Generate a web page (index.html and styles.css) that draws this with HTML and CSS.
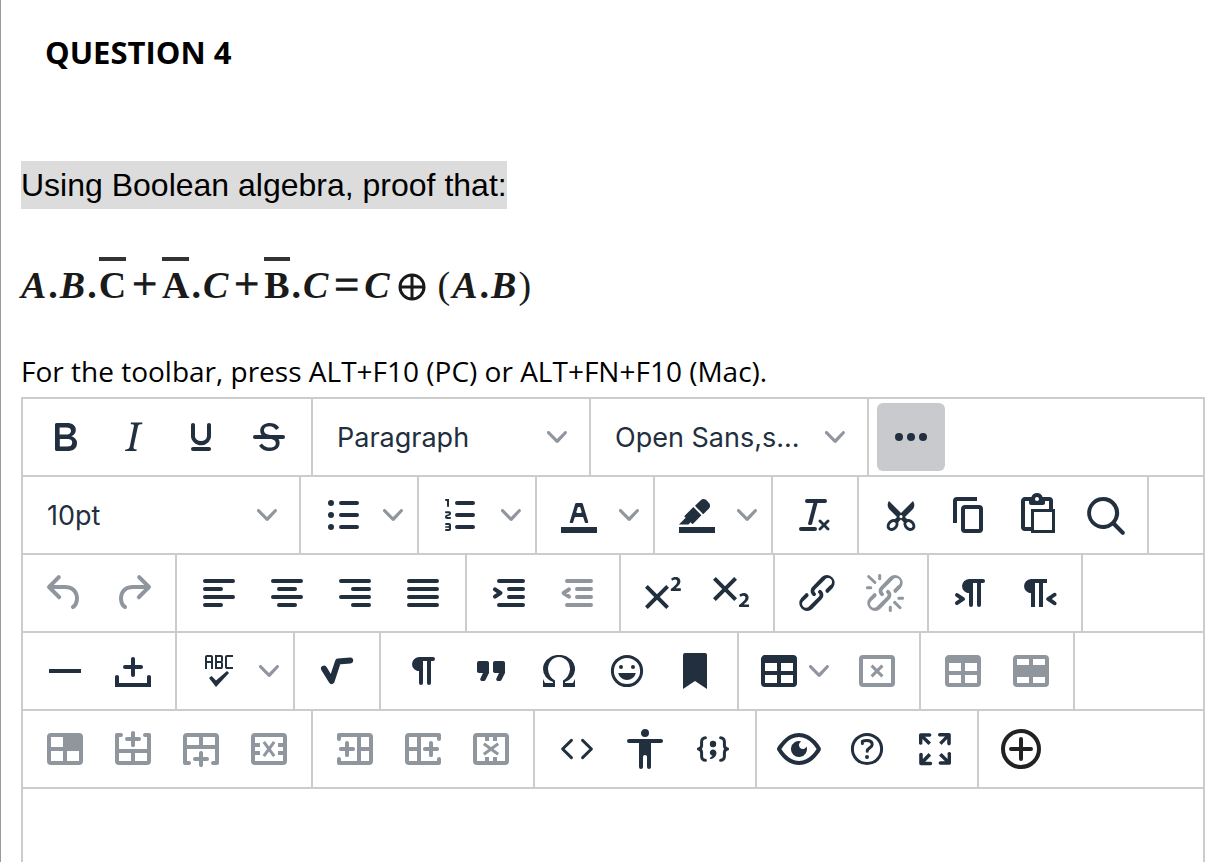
FILE: index.html
```
<!DOCTYPE html>
<html lang="en">
<head>
    <meta charset="UTF-8">
    <meta name="viewport" content="width=device-width, initial-scale=1.0">
    <title>Question 4</title>
    <link rel="stylesheet" href="styles.css">
</head>
<body>
    <!-- shapes used by more than one button -->
    <svg class="sprite" aria-hidden="true">
        <symbol id="chevron" viewBox="0 0 10 10"><path d="M8.7 2.2c.3-.3.8-.3 1 0 .4.4.4.9 0 1.2L5.7 7.8c-.3.3-.9.3-1.2 0L.2 3.4a.8.8 0 0 1 0-1.2c.3-.3.8-.3 1.1 0L5 6l3.7-3.8z"/></symbol>
        <symbol id="table" viewBox="0 0 24 24"><path fill-rule="evenodd" d="M19 4a2 2 0 0 1 2 2v12a2 2 0 0 1-2 2H5a2 2 0 0 1-2-2V6c0-1.1.9-2 2-2h14zM5 14v4h6v-4H5zm14 0h-6v4h6v-4zm0-6h-6v4h6V8zM5 12h6V8H5v4z"/></symbol>
        <symbol id="undo" viewBox="0 0 24 24"><path d="M6.4 8H12c3.7 0 6.2 2 6.8 5.1.6 2.7-.4 5.6-2.3 6.8a1 1 0 0 1-1-1.8c1.1-.6 1.8-2.7 1.4-4.6-.5-2.1-2.1-3.5-4.9-3.5H6.4l3.3 3.3a1 1 0 1 1-1.4 1.4l-5-5a1 1 0 0 1 0-1.4l5-5a1 1 0 0 1 1.4 1.4L6.4 8z"/></symbol>
        <symbol id="chain" viewBox="0 0 24 24"><path d="M6.2 12.3a1 1 0 0 1 1.4 1.4l-2.1 2a2 2 0 1 0 2.7 2.8l4.8-4.8a1 1 0 0 0 0-1.4 1 1 0 1 1 1.4-1.3 2.9 2.9 0 0 1 0 4L9.6 20a3.9 3.9 0 0 1-5.5-5.5l2-2zm11.6-.6a1 1 0 0 1-1.4-1.4l2-2a2 2 0 1 0-2.6-2.8L11 10.3a1 1 0 0 0 0 1.4A1 1 0 1 1 9.6 13a2.9 2.9 0 0 1 0-4L14.4 4a3.9 3.9 0 0 1 5.5 5.5l-2 2z"/></symbol>
        <symbol id="row-before" viewBox="0 0 24 24"><path fill-rule="evenodd" d="M6 4a1 1 0 1 1 0 2H5v6h14V6h-1a1 1 0 0 1 0-2h2c.6 0 1 .4 1 1v13a2 2 0 0 1-2 2H5a2 2 0 0 1-2-2V5c0-.6.4-1 1-1h2zm5 10H5v4h6v-4zm8 0h-6v4h6v-4zM12 3c.5 0 1 .4 1 .9V6h2a1 1 0 0 1 0 2h-2v2a1 1 0 0 1-2 .1V8H9a1 1 0 0 1 0-2h2V4c0-.6.4-1 1-1z"/></symbol>
        <symbol id="col-before" viewBox="0 0 24 24"><path fill-rule="evenodd" d="M19 4a2 2 0 0 1 2 2v12a2 2 0 0 1-2 2H4a1 1 0 0 1-1-1v-2a1 1 0 0 1 2 0v1h8V6H5v1a1 1 0 1 1-2 0V5c0-.6.4-1 1-1h15zm0 9h-4v5h4v-5zM8 8c.5 0 1 .4 1 .9V11h2a1 1 0 0 1 .1 2H9v2a1 1 0 0 1-2 .1V13H5a1 1 0 0 1-.1-2H7V9c0-.6.4-1 1-1zm11-2h-4v5h4V6z"/></symbol>
    </svg>

    <main class="page">
        <h2 class="question-title">QUESTION 4</h2>
        <p class="prompt"><span class="marked">Using Boolean algebra, proof that:</span></p>

        <div class="formula">
            <i>A</i><b>.</b><i>B</i><b>.</b><b class="not">C</b><span class="op">+</span><b class="not">A</b><b>.</b><i>C</i><span class="op">+</span><b class="not">B</b><b>.</b><i>C</i><span class="op">=</span><i>C</i>
            <svg class="xor" viewBox="0 0 28 28" role="img" aria-label="xor"><circle cx="14" cy="14" r="12"/><path d="M14 2v24M2 14h24"/></svg>
            <span>(</span><i>A</i><b>.</b><i>B</i><span>)</span>
        </div>

        <label class="hint" for="answer">For the toolbar, press ALT+F10 (PC) or ALT+FN+F10 (Mac).</label>

        <div class="editor">
            <div class="toolbar" role="toolbar">
                <div class="group">
                    <button class="tool" aria-label="Bold"><svg viewBox="0 0 24 24"><path fill-rule="evenodd" d="M7.8 19c-.3 0-.5 0-.6-.2l-.2-.5V5.7c0-.2 0-.4.2-.5l.6-.2h5c1.5 0 2.7.3 3.5 1 .7.6 1.1 1.4 1.1 2.5a3 3 0 0 1-.6 1.9c-.4.6-1 1-1.6 1.2.4.1.9.3 1.3.6s.8.7 1 1.2c.4.4.5 1 .5 1.6 0 1.3-.4 2.3-1.3 3-.8.7-2.1 1-3.8 1H7.8zm5-8.3c.6 0 1.2-.1 1.6-.5.4-.3.6-.7.6-1.3 0-1.1-.8-1.7-2.3-1.7H9.3v3.5h3.4zm.5 6c.7 0 1.3-.1 1.7-.4.4-.4.6-.9.6-1.5s-.2-1-.7-1.4c-.4-.3-1-.4-2-.4H9.4v3.8h4z"/></svg></button>
                    <button class="tool" aria-label="Italic"><svg viewBox="0 0 24 24"><path d="M16.7 4.7l-.1.9h-.3c-.6 0-1 0-1.4.3-.3.3-.4.6-.5 1.1l-2.1 9.8v.6c0 .5.4.8 1.4.8h.2l-.2.8H8l.2-.8h.2c1.1 0 1.8-.5 2-1.5l2-9.8.1-.5c0-.6-.4-.8-1.4-.8h-.3l.2-.9h5.8z"/></svg></button>
                    <button class="tool" aria-label="Underline"><svg viewBox="0 0 24 24"><path d="M16 5c.6 0 1 .4 1 1v5.5a4 4 0 0 1-.4 1.8l-1 1.4a5.3 5.3 0 0 1-5.5 1 5 5 0 0 1-1.6-1c-.5-.4-.8-.9-1.1-1.4a4 4 0 0 1-.4-1.8V6c0-.6.4-1 1-1s1 .4 1 1v5.5c0 .3 0 .6.2 1l.6.7a3.3 3.3 0 0 0 2.2.8 3.4 3.4 0 0 0 2.2-.8c.3-.2.4-.5.6-.8l.2-.9V6c0-.6.4-1 1-1zM8 17h8c.6 0 1 .4 1 1s-.4 1-1 1H8a1 1 0 0 1 0-2z"/></svg></button>
                    <button class="tool" aria-label="Strikethrough"><svg viewBox="0 0 24 24"><path d="M15.6 8.5c-.5-.7-1-1.1-1.3-1.3-.6-.4-1.3-.6-2-.6-2.7 0-2.8 1.7-2.8 2.1 0 1.6 1.8 2 3.2 2.3 4.4.9 4.6 2.8 4.6 3.9 0 1.4-.7 4.1-5 4.1A6.2 6.2 0 0 1 7 16.4l1.5-1.1c.4.6 1.6 2 3.7 2 1.6 0 2.5-.4 3-1.2.4-.8.3-2-.8-2.6-.7-.4-1.6-.7-2.9-1-1-.2-3.9-.8-3.9-3.6C7.6 6 10.3 5 12.4 5c2.9 0 4.2 1.6 4.7 2.4l-1.5 1.1z"/><path d="M5 11h14a1 1 0 0 1 0 2H5a1 1 0 0 1 0-2z"/></svg></button>
                </div>
                <div class="group">
                    <div class="picker">
                        <select aria-label="Block style"><option>Paragraph</option></select>
                        <svg class="chevron"><use href="#chevron"/></svg>
                    </div>
                </div>
                <div class="group">
                    <div class="picker">
                        <select aria-label="Font"><option>Open Sans,s...</option></select>
                        <svg class="chevron"><use href="#chevron"/></svg>
                    </div>
                </div>
                <div class="group last">
                    <button class="tool active" aria-label="More" aria-pressed="true"><svg viewBox="0 0 24 24"><circle cx="6" cy="12" r="2"/><circle cx="12" cy="12" r="2"/><circle cx="18" cy="12" r="2"/></svg></button>
                </div>
            </div>

            <div class="toolbar overflow" role="toolbar">
                <div class="group">
                    <div class="picker">
                        <select aria-label="Font size"><option>10pt</option></select>
                        <svg class="chevron"><use href="#chevron"/></svg>
                    </div>
                </div>
                <div class="group">
                    <button class="tool" aria-label="Bullet list"><svg viewBox="0 0 24 24"><circle cx="6" cy="6" r="1.5"/><circle cx="6" cy="12" r="1.5"/><circle cx="6" cy="18" r="1.5"/><path class="line" d="M11 6h8M11 12h8M11 18h8"/></svg></button>
                    <button class="arrow" aria-label="Bullet list options"><svg class="chevron"><use href="#chevron"/></svg></button>
                </div>
                <div class="group">
                    <button class="tool" aria-label="Numbered list"><svg viewBox="0 0 24 24"><path class="line" d="M10 6h8M10 12h8M10 18h8"/><path d="M6 4v3.5c0 .3-.2.5-.5.5a.5.5 0 0 1-.5-.5V5h-.5a.5.5 0 0 1 0-1H6zm-1 8.8l.2.2h1.3c.3 0 .5.2.5.5s-.2.5-.5.5H4.9a1 1 0 0 1-.9-1V13c0-.4.3-.8.6-1l1.2-.4.2-.3a.2.2 0 0 0-.2-.2H4.5a.5.5 0 0 1-.5-.5c0-.3.2-.5.5-.5h1.6c.5 0 .9.4.9 1v.1c0 .4-.3.8-.6 1l-1.2.4-.2.3zM7 17v2c0 .6-.4 1-1 1H4.5a.5.5 0 0 1 0-1h1.2c.2 0 .3-.1.3-.3 0-.2-.1-.3-.3-.3H4.4a.4.4 0 1 1 0-.8h1.3c.2 0 .3-.1.3-.3 0-.2-.1-.3-.3-.3H4.5a.5.5 0 1 1 0-1H6c.6 0 1 .4 1 1z"/></svg></button>
                    <button class="arrow" aria-label="Numbered list options"><svg class="chevron"><use href="#chevron"/></svg></button>
                </div>
                <div class="group">
                    <button class="tool" aria-label="Text color"><svg viewBox="0 0 24 24"><path d="M3 18h18v3H3z"/><path fill-rule="evenodd" d="M8.7 16h-.8a.5.5 0 0 1-.5-.6l2.7-9c.1-.3.3-.4.5-.4h2.8c.2 0 .4.1.5.4l2.7 9a.5.5 0 0 1-.5.6h-.8a.5.5 0 0 1-.4-.4l-.7-2.2c0-.3-.3-.4-.5-.4h-3.4c-.2 0-.4.1-.5.4l-.7 2.2c0 .3-.2.4-.4.4zm2.6-7.6l-.6 2a.5.5 0 0 0 .5.6h1.6a.5.5 0 0 0 .5-.6l-.6-2c0-.3-.3-.4-.5-.4h-.4c-.2 0-.4.1-.5.4z"/></svg></button>
                    <button class="arrow" aria-label="Text color options"><svg class="chevron"><use href="#chevron"/></svg></button>
                </div>
                <div class="group">
                    <button class="tool" aria-label="Highlight color"><svg viewBox="0 0 24 24"><path d="M3 18h18v3H3z"/><path d="M7.7 16.7H3l3.3-3.3-.7-.8L10.2 8l4 4.1-4 4.2c-.2.2-.6.2-.8 0l-.6-.7-1.1 1.1zm5-7.5L11 7.4l3-2.9a2 2 0 0 1 2.6 0L18 6c.7.7.7 2 0 2.7l-2.9 2.9-1.8-1.8-.5-.6"/></svg></button>
                    <button class="arrow" aria-label="Highlight color options"><svg class="chevron"><use href="#chevron"/></svg></button>
                </div>
                <div class="group">
                    <button class="tool" aria-label="Clear formatting"><svg viewBox="0 0 24 24"><path d="M13.2 6a1 1 0 0 1 0 .2l-2.6 10a1 1 0 0 1-1 .8h-.2a.8.8 0 0 1-.8-1l2.6-10H8a1 1 0 1 1 0-2h9a1 1 0 0 1 0 2h-3.8zM5 18h7a1 1 0 0 1 0 2H5a1 1 0 0 1 0-2zm13 1.5L16.5 18 15 19.5a.7.7 0 0 1-1-1l1.5-1.5-1.5-1.5a.7.7 0 0 1 1-1l1.5 1.5 1.5-1.5a.7.7 0 0 1 1 1L17.5 17l1.5 1.5a.7.7 0 0 1-1 1z"/></svg></button>
                </div>
                <div class="group">
                    <button class="tool" aria-label="Cut"><svg viewBox="0 0 24 24"><path fill-rule="evenodd" d="M6 5l6 6 6-6 .5 1a3.3 3.3 0 0 1 0 2c0 .4-.3.7-.5 1l-4 4 1.6 1.6-1.6 1.6-2-2-2 2-1.6-1.6L10 13 6 9l-.5-1a3.3 3.3 0 0 1 0-2c0-.4.3-.7.5-1zM12 12a.8.8 0 1 0 0 1.6.8.8 0 0 0 0-1.6z"/><ellipse class="loop" cx="7.8" cy="17" rx="2.5" ry="1.9" transform="rotate(-45 7.8 17)"/><ellipse class="loop" cx="16.2" cy="17" rx="2.5" ry="1.9" transform="rotate(45 16.2 17)"/></svg></button>
                    <button class="tool" aria-label="Copy"><svg viewBox="0 0 24 24"><path fill-rule="evenodd" d="M16 3H6a2 2 0 0 0-2 2v11h2V5h10V3zm1 4a2 2 0 0 1 2 2v10a2 2 0 0 1-2 2h-7a2 2 0 0 1-2-2V9c0-1.2.9-2 2-2h7zm0 12V9h-7v10h7z"/></svg></button>
                    <button class="tool" aria-label="Paste"><svg viewBox="0 0 24 24"><path fill-rule="evenodd" d="M18 9V5h-2v1c0 .6-.4 1-1 1H9a1 1 0 0 1-1-1V5H6v13h3V9h9zM9 20H6a2 2 0 0 1-2-2V5c0-1.1.9-2 2-2h3.2A3 3 0 0 1 12 1a3 3 0 0 1 2.8 2H18a2 2 0 0 1 2 2v4h1v12H9v-1zm1.5-9.5v9h9v-9h-9zM12 3a1 1 0 0 0-1 1c0 .5.4 1 1 1s1-.5 1-1-.4-1-1-1z"/></svg></button>
                    <button class="tool" aria-label="Find"><svg viewBox="0 0 24 24"><path fill-rule="evenodd" d="M16 17.3a8 8 0 1 1 1.4-1.4l4.3 4.4a1 1 0 0 1-1.4 1.4l-4.4-4.3zm-5-.3a6 6 0 1 0 0-12 6 6 0 0 0 0 12z"/></svg></button>
                </div>

                <div class="group">
                    <button class="tool" aria-label="Undo" disabled><svg><use href="#undo"/></svg></button>
                    <button class="tool" aria-label="Redo" disabled><svg class="flip-x"><use href="#undo"/></svg></button>
                </div>
                <div class="group">
                    <button class="tool" aria-label="Align left"><svg viewBox="0 0 24 24"><path class="line" d="M5 6h14M5 10h8M5 14h14M5 18h8"/></svg></button>
                    <button class="tool" aria-label="Align center"><svg viewBox="0 0 24 24"><path class="line" d="M5 6h14M8 10h8M5 14h14M8 18h8"/></svg></button>
                    <button class="tool" aria-label="Align right"><svg viewBox="0 0 24 24"><path class="line" d="M5 6h14M11 10h8M5 14h14M11 18h8"/></svg></button>
                    <button class="tool" aria-label="Justify"><svg viewBox="0 0 24 24"><path class="line" d="M5 6h14M5 10h14M5 14h14M5 18h14"/></svg></button>
                </div>
                <div class="group">
                    <button class="tool" aria-label="Increase indent"><svg viewBox="0 0 24 24"><path class="line" d="M7 6h12M12 10h7M12 14h7M7 18h12M5 10.200l2.700 1.800L5 13.800"/></svg></button>
                    <button class="tool" aria-label="Decrease indent" disabled><svg viewBox="0 0 24 24"><path class="line" d="M7 6h12M12 10h7M12 14h7M7 18h12M8 10.200L5.300 12 8 13.800"/></svg></button>
                </div>
                <div class="group">
                    <button class="tool" aria-label="Superscript"><svg viewBox="0 0 24 24"><path d="M15 9.4L10.4 14l4.6 4.6-1.4 1.4L9 15.4 4.4 20 3 18.6 7.6 14 3 9.4 4.4 8 9 12.6 13.6 8 15 9.4zm5.9 1.6h-5v-1l1-.8 1.7-1.6c.3-.5.5-.9.5-1.3 0-.3 0-.5-.2-.7-.2-.2-.5-.3-.9-.3l-.8.2-.7.4-.4-1.2c.2-.2.5-.4 1-.5.3-.2.8-.2 1.2-.2.8 0 1.4.2 1.8.6.4.4.6 1 .6 1.6 0 .5-.2 1-.5 1.5l-1.3 1.4-.6.5h2.6V11z"/></svg></button>
                    <button class="tool" aria-label="Subscript"><svg viewBox="0 0 24 24"><path d="M10.4 10l4.6 4.6-1.4 1.4L9 11.4 4.4 16 3 14.6 7.6 10 3 5.4 4.4 4 9 8.6 13.6 4 15 5.4 10.4 10zM21 19h-5v-1l1-.8 1.7-1.6c.3-.4.5-.8.5-1.2 0-.3 0-.6-.2-.7-.2-.2-.5-.3-.9-.3a2 2 0 0 0-.8.2l-.7.3-.4-1.1 1-.6 1.2-.2c.8 0 1.4.3 1.8.7.4.4.6.9.6 1.5s-.2 1.1-.5 1.6a8 8 0 0 1-1.3 1.3l-.6.6h2.6V19z"/></svg></button>
                </div>
                <div class="group">
                    <button class="tool" aria-label="Insert link"><svg><use href="#chain"/></svg></button>
                    <button class="tool" aria-label="Remove link" disabled><svg viewBox="0 0 24 24"><use href="#chain"/><path d="M7.6 6.3a.8.8 0 0 1-1 1.1L3.3 4.2a.7.7 0 1 1 1-1l3.2 3.1zM5.1 8.6a.8.8 0 0 1 0 1.5H3a.8.8 0 0 1 0-1.5H5zm5-3.5a.8.8 0 0 1-1.5 0V3a.8.8 0 0 1 1.5 0V5zm6 11.8a.8.8 0 0 1 1-1l3.2 3.2a.8.8 0 0 1-1 1L16 17zm-2.2 2a.8.8 0 0 1 1.5 0V21a.8.8 0 0 1-1.5 0V19zm5-3.5a.7.7 0 1 1 0-1.5H21a.8.8 0 0 1 0 1.5H19z"/></svg></button>
                </div>
                <div class="group">
                    <button class="tool" aria-label="Left to right"><svg viewBox="0 0 24 24"><path d="M11 5h7a1 1 0 0 1 0 2h-1v11a1 1 0 0 1-2 0V7h-2v11a1 1 0 0 1-2 0v-6c-.5 0-1 0-1.4-.3A3.4 3.4 0 0 1 7.800 10a3.3 3.3 0 0 1 0-2.800 3.4 3.4 0 0 1 1.800-1.800L11 5zM4.400 16.200L6.200 15l-1.800-1.200a1 1 0 0 1 1.200-1.600l3 2a1 1 0 0 1 0 1.600l-3 2a1 1 0 1 1-1.200-1.600z"/></svg></button>
                    <button class="tool" aria-label="Right to left"><svg viewBox="0 0 24 24"><path d="M8 5h8v2h-2v12h-2V7h-2v12H8v-7c-.5 0-1 0-1.400-.3A3.4 3.4 0 0 1 4.800 10a3.3 3.3 0 0 1 0-2.800 3.4 3.4 0 0 1 1.800-1.800L8 5zm12 11.200a1 1 0 1 1-1 1.600l-3-2a1 1 0 0 1 0-1.600l3-2a1 1 0 1 1 1 1.600L18.400 15l1.800 1.200z"/></svg></button>
                </div>

                <div class="group">
                    <button class="tool" aria-label="Horizontal line"><svg viewBox="0 0 24 24"><path d="M4 11h16v2H4z"/></svg></button>
                    <button class="tool" aria-label="Nonbreaking space"><svg viewBox="0 0 24 24"><path d="M11 11H8a1 1 0 1 1 0-2h3V6c0-.6.4-1 1-1s1 .4 1 1v3h3c.6 0 1 .4 1 1s-.4 1-1 1h-3v3c0 .6-.4 1-1 1a1 1 0 0 1-1-1v-3zm10 4v5H3v-5c0-.6.4-1 1-1s1 .4 1 1v3h14v-3c0-.6.4-1 1-1s1 .4 1 1z"/></svg></button>
                </div>
                <div class="group">
                    <button class="tool" aria-label="Spellcheck"><svg viewBox="0 0 24 24"><path fill-rule="evenodd" d="M6 8v3H5V5c0-.3.1-.5.3-.7.2-.2.4-.3.7-.3h2c.3 0 .5.1.7.3.2.2.3.4.3.7v6H8V8H6zm0-3v2h2V5H6zm13 0h-3v5h3v1h-3a1 1 0 0 1-.7-.3 1 1 0 0 1-.3-.7V5c0-.3.1-.5.3-.7.2-.2.4-.3.7-.3h3v1zm-5 1.5l-.1.7c-.1.2-.3.3-.6.3.3 0 .5.1.6.3l.1.7V10c0 .3-.1.5-.3.7a1 1 0 0 1-.7.3h-3V4h3c.3 0 .5.1.7.3.2.2.3.4.3.7v1.5zM13 10V8h-2v2h2zm0-3V5h-2v2h2zm3 5l1 1-6.5 7L7 15.5l1.3-1 2.2 2.2L16 12z"/></svg></button>
                    <button class="arrow" aria-label="Spellcheck options"><svg class="chevron"><use href="#chevron"/></svg></button>
                </div>
                <div class="group">
                    <button class="tool" aria-label="Math editor"><svg viewBox="0 0 24 24"><path class="line thick" d="M5.5 10.8L9.300 17l3.200-9.700 6.100-.6"/></svg></button>
                </div>
                <div class="group">
                    <button class="tool" aria-label="Show invisible characters"><svg viewBox="0 0 24 24"><path d="M10 5h7a1 1 0 0 1 0 2h-1v11a1 1 0 0 1-2 0V7h-2v11a1 1 0 0 1-2 0v-6c-.5 0-1 0-1.4-.3A3.4 3.4 0 0 1 6.8 10a3.3 3.3 0 0 1 0-2.8 3.4 3.4 0 0 1 1.8-1.8L10 5z"/></svg></button>
                    <button class="tool" aria-label="Blockquote"><svg viewBox="0 0 24 24"><path d="M7.5 17h.9c.4 0 .7-.2.9-.6L11 13V8c0-.6-.4-1-1-1H6a1 1 0 0 0-1 1v4c0 .6.4 1 1 1h2l-1.3 2.7a1 1 0 0 0 .8 1.3zm8 0h.9c.4 0 .7-.2.9-.6L19 13V8c0-.6-.4-1-1-1h-4a1 1 0 0 0-1 1v4c0 .6.4 1 1 1h2l-1.3 2.7a1 1 0 0 0 .8 1.3z"/></svg></button>
                    <button class="tool" aria-label="Special character"><svg viewBox="0 0 24 24"><path d="M15 18h4l1-2v4h-6v-3.3l1.4-1a6 6 0 0 0 1.8-2.9 6.3 6.3 0 0 0-.1-4.1 5.8 5.8 0 0 0-3-3.2c-.6-.3-1.3-.5-2.1-.5a5.1 5.1 0 0 0-3.9 1.8 6.3 6.3 0 0 0-1.3 6 6.2 6.2 0 0 0 1.8 3l1.4.9V20H4v-4l1 2h4v-.5l-2-1L5.400 15A6.5 6.5 0 0 1 4 11c0-1 .2-1.9.6-2.7A7 7 0 0 1 7.8 5C8.900 4.300 10.400 4 12 4c1.600 0 3 .3 4.200 1a7 7 0 0 1 3.200 3.300A6.5 6.5 0 0 1 18.600 15L17 16.500l-2 1v.5z"/></svg></button>
                    <button class="tool" aria-label="Emoticons"><svg viewBox="0 0 24 24"><circle class="ring" cx="12" cy="12" r="7.3"/><circle cx="9" cy="10" r="1"/><circle cx="15" cy="10" r="1"/><path d="M7.6 13h8.8a4.500 4.500 0 0 1-8.800 0z"/></svg></button>
                    <button class="tool" aria-label="Anchor"><svg viewBox="0 0 24 24"><path d="M6 4v17l6-4 6 4V4c0-.6-.4-1-1-1H7a1 1 0 0 0-1 1z"/></svg></button>
                </div>
                <div class="group">
                    <button class="tool menu" aria-label="Table"><svg><use href="#table"/></svg><span class="menu-arrow"><svg class="chevron"><use href="#chevron"/></svg></span></button>
                    <button class="tool" aria-label="Delete table" disabled><svg viewBox="0 0 24 24"><rect class="frame" x="4" y="5" width="16" height="14" rx="1"/><path class="cross" d="M9.300 9.300l5.400 5.400M14.700 9.300l-5.400 5.400"/></svg></button>
                </div>
                <div class="group">
                    <button class="tool" aria-label="Table properties" disabled><svg><use href="#table"/></svg></button>
                    <button class="tool" aria-label="Row properties" disabled><svg viewBox="0 0 24 24"><rect class="frame" x="4" y="5" width="16" height="14" rx="1"/><path d="M4 9h16v6H4zM11 5h2v14h-2z"/></svg></button>
                </div>

                <div class="group">
                    <button class="tool" aria-label="Cell properties" disabled><svg viewBox="0 0 24 24"><rect class="frame" x="4" y="5" width="16" height="14" rx="1"/><path d="M11 5h9v8h-9zM4 11h8v2H4zM11 12h2v7h-2z"/></svg></button>
                    <button class="tool" aria-label="Insert row before" disabled><svg><use href="#row-before"/></svg></button>
                    <button class="tool" aria-label="Insert row after" disabled><svg class="flip-y"><use href="#row-before"/></svg></button>
                    <button class="tool" aria-label="Delete row" disabled><svg viewBox="0 0 24 24"><rect class="frame" x="4" y="5" width="16" height="14" rx="1"/><path class="tick" d="M5 10h2.500M5 14h2.500M16.500 10H19M16.500 14H19"/><path class="cross" d="M9.400 8.400l5.200 7.200M14.600 8.400l-5.200 7.200"/></svg></button>
                </div>
                <div class="group">
                    <button class="tool" aria-label="Insert column before" disabled><svg><use href="#col-before"/></svg></button>
                    <button class="tool" aria-label="Insert column after" disabled><svg class="flip-x"><use href="#col-before"/></svg></button>
                    <button class="tool" aria-label="Delete column" disabled><svg viewBox="0 0 24 24"><rect class="frame" x="4" y="5" width="16" height="14" rx="1"/><path class="tick" d="M10 6v2M14 6v2M10 16v2M14 16v2"/><path class="cross" d="M8.400 9.400l7.200 5.200M15.600 9.400l-7.200 5.200"/></svg></button>
                </div>
                <div class="group">
                    <button class="tool" aria-label="Source code"><svg viewBox="0 0 24 24"><path class="line thin" d="M9.200 7.700L4.800 12l4.400 4.300M14.800 7.700l4.400 4.300-4.400 4.300"/></svg></button>
                    <button class="tool" aria-label="Accessibility checker"><svg viewBox="0 0 24 24"><path d="M12 2a2 2 0 0 1 2 2 2 2 0 0 1-2 2 2 2 0 0 1-2-2c0-1.100.9-2 2-2zm8 7h-5v12c0 .6-.4 1-1 1a1 1 0 0 1-1-1v-5c0-.6-.4-1-1-1a1 1 0 0 0-1 1v5c0 .6-.4 1-1 1a1 1 0 0 1-1-1V9H4a1 1 0 1 1 0-2h16c.6 0 1 .4 1 1s-.4 1-1 1z"/></svg></button>
                    <button class="tool" aria-label="Code sample"><svg viewBox="0 0 24 24"><path class="line thin" d="M8.200 6.400a1.900 1.900 0 0 0-1.900 1.900v1.900A1.900 1.900 0 0 1 4.700 12a1.900 1.900 0 0 1 1.600 1.800v1.900a1.900 1.900 0 0 0 1.900 1.900M15.800 6.400a1.900 1.900 0 0 1 1.900 1.900v1.900a1.900 1.900 0 0 0 1.600 1.800 1.900 1.900 0 0 0-1.600 1.800v1.900a1.900 1.900 0 0 1-1.900 1.900"/><circle cx="12" cy="9.500" r="1.600"/><path d="M12 12.200c1 0 1.700.7 1.700 1.700 0 1.600-1 2.800-2.800 3.100-.5 0-.6-.6-.2-.8.6-.3.9-.6 1-.9-.8-.1-1.300-.7-1.300-1.500 0-.9.7-1.600 1.600-1.600z"/></svg></button>
                </div>
                <div class="group">
                    <button class="tool" aria-label="Preview"><svg viewBox="0 0 24 24"><path fill-rule="evenodd" d="M3.5 12.5c.5.8 1.1 1.6 1.8 2.3 2 2 4.2 3.2 6.7 3.2s4.700-1.200 6.700-3.200a16.200 16.200 0 0 0 2.100-2.800 15.700 15.700 0 0 0-2.100-2.800c-2-2-4.200-3.200-6.700-3.200a9.300 9.300 0 0 0-6.700 3.200A16.200 16.200 0 0 0 3.200 12c0 .2.2.3.3.5zm-2.400-1l.7-1.200L4 7.800C6.200 5.400 8.900 4 12 4c3 0 5.800 1.400 8.100 3.800a18.200 18.200 0 0 1 2.800 3.700v1l-.7 1.200-2.100 2.500c-2.300 2.400-5 3.800-8.100 3.800-3 0-5.800-1.400-8.100-3.800a18.200 18.200 0 0 1-2.800-3.700 1 1 0 0 1 0-1zm12-3.300a2 2 0 1 0 2.700 2.600 4 4 0 1 1-2.600-2.600z"/></svg></button>
                    <button class="tool" aria-label="Help"><svg viewBox="0 0 24 24"><circle class="ring" cx="12" cy="12" r="7.300"/><path class="line thin" d="M9.700 9.300V8.200c.5-.3 1.300-.4 2.300-.4 1.600 0 2.600.7 2.600 2 0 1.800-2.500 1.500-2.500 3.300"/><circle cx="12" cy="16" r="1"/></svg></button>
                    <button class="tool" aria-label="Fullscreen"><svg viewBox="0 0 24 24"><path d="M15.300 10l-1.200-1.300 2.900-3h-2.300a.9.9 0 1 1 0-1.700H19c.5 0 .9.4.9.9v4.400a.9.9 0 1 1-1.800 0V7l-2.900 3zm0 4l3 3v-2.300a.9.9 0 1 1 1.700 0V19c0 .5-.4.9-.9.9h-4.400a.9.9 0 1 1 0-1.800H17l-3-2.900 1.300-1.200zM10 15.400l-2.900 3h2.300a.9.9 0 1 1 0 1.700H5a.9.9 0 0 1-.9-.9v-4.400a.9.9 0 1 1 1.800 0V17l2.900-3 1.200 1.300zM8.700 10L5.700 7v2.300a.9.9 0 0 1-1.700 0V5c0-.5.4-.9.9-.9h4.400a.9.9 0 0 1 0 1.800H7l3 2.900-1.300 1.200z"/></svg></button>
                </div>
                <div class="group last">
                    <button class="tool add" aria-label="Add content"><svg viewBox="0 0 24 24"><circle class="ring" cx="12" cy="12" r="9"/><path class="line" d="M12 7v10M7 12h10"/></svg></button>
                </div>
            </div>
            <textarea class="answer" id="answer"></textarea>
        </div>
    </main>
</body>
</html>
```
FILE: styles.css
```
* {
    box-sizing: border-box;
}

body {
    margin: 0;
    background-color: #fff;
    color: #000;
    font-family: "Open Sans", sans-serif;
}

.sprite {
    display: none;
}

.page {
    display: flex;
    flex-direction: column;
    min-height: 100vh;
    padding: 31px 11px 0 20px;
    border-left: 1px solid #999;
}

.question-title {
    margin: 0 24px 88px;
    font-size: 31px;
    line-height: 42px;
}

.prompt {
    margin: 0 0 52px;
    font-family: "Liberation Sans", Arial, sans-serif;
    font-size: 32px;
    line-height: 48px;
}

.marked {
    display: inline-block;
    background-color: #dcdcdc;
}

.formula {
    display: flex;
    align-items: center;
    gap: 2px;
    margin-bottom: 42px;
    color: #1a1a1a;
    font-family: "Liberation Serif", "Times New Roman", serif;
    font-size: 38px;
    line-height: 48px;
}

.formula i {
    font-weight: bold;
}

/* negated variable, short bar above the letter */
.not {
    border-top: 4px solid #333;
    margin-top: -4px;
}

.op {
    margin: 0 3px 0 4px;
    font-size: 44px;
    -webkit-text-stroke: 1px #1a1a1a;
}

.xor {
    width: 28px;
    height: 28px;
    margin: 4px 10px 0 6px;
    fill: none;
    stroke: #1a1a1a;
    stroke-width: 3;
}

.hint {
    margin-bottom: 6px;
    font-size: 28px;
    line-height: 40px;
}

.editor {
    display: flex;
    flex-direction: column;
    flex: 1;
    border: 2px solid #ccc;
    border-bottom: none;
}

.toolbar {
    display: flex;
    border-bottom: 2px solid #ccc;
}

.overflow {
    flex-wrap: wrap;
    border-bottom: none;
    background: repeating-linear-gradient(#fff 0, #fff 76px, #ccc 76px, #ccc 78px);
}

.group {
    display: flex;
    padding: 4px 8px;
    border-right: 2px solid #ccc;
}

.overflow .group {
    margin-bottom: 2px;
}

.group.last {
    border-right: none;
}

.tool,
.arrow {
    display: flex;
    align-items: center;
    justify-content: center;
    width: 68px;
    height: 68px;
    padding: 0;
    border: none;
    border-radius: 6px;
    background: none;
    color: #222f3e;
    cursor: pointer;
}

.arrow {
    width: 32px;
}

.tool.menu {
    width: 96px;
}

.menu-arrow {
    display: flex;
    justify-content: center;
    width: 32px;
}

.tool.active {
    background-color: #c9cace;
}

.tool.add {
    color: #222;
}

.tool:disabled {
    color: #90969e;
    cursor: default;
}

.tool svg {
    width: 48px;
    height: 48px;
    fill: currentColor;
}

.tool .chevron,
.chevron {
    width: 20px;
    height: 20px;
    fill: #90969e;
}

.line,
.loop,
.ring,
.frame,
.tick,
.cross {
    fill: none;
    stroke: currentColor;
    stroke-width: 2;
}

.line {
    stroke-linecap: round;
    stroke-linejoin: round;
}

.line.thick {
    stroke-width: 3;
}

.line.thin,
.loop,
.ring,
.cross {
    stroke-width: 1.5;
}

.add .ring {
    stroke-width: 2;
}

.flip-x {
    transform: scaleX(-1);
}

.flip-y {
    transform: scaleY(-1);
}

.picker {
    display: grid;
    align-items: center;
    width: 260px;
    height: 68px;
}

.picker select,
.picker .chevron {
    grid-area: 1 / 1;
}

.picker .chevron {
    justify-self: end;
    margin-right: 14px;
    pointer-events: none;
}

.picker select {
    width: 100%;
    height: 68px;
    padding: 0 48px 0 16px;
    border: none;
    background: none;
    color: #222f3e;
    font-family: Inter, sans-serif;
    font-size: 27px;
    appearance: none;
}

.answer {
    flex: 1;
    min-height: 70px;
    padding: 20px;
    border: none;
    outline: none;
    font-family: "Open Sans", sans-serif;
    font-size: 28px;
    resize: none;
}
```
